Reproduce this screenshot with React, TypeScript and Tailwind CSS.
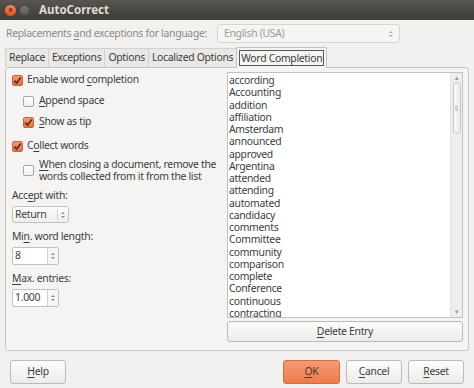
import React from 'react';

const words = [
  'according', 'Accounting', 'addition', 'affiliation', 'Amsterdam', 'announced', 'approved',
  'Argentina', 'attended', 'attending', 'automated', 'candidacy', 'comments', 'Committee',
  'community', 'comparison', 'complete', 'Conference', 'continuous', 'contracting',
];

// letra subrayada (mnemónico)
const U: React.FC<{ children: React.ReactNode }> = ({ children }) => (
  <span className="underline underline-offset-[2px] decoration-[1px]">{children}</span>
);

const Check: React.FC<{ on?: boolean }> = ({ on }) =>
  on ? (
    <span className="w-[11px] h-[11px] rounded-[2px] bg-gradient-to-b from-[#f39a72] to-[#e46d3e] border border-[#c9643c] flex items-center justify-center shrink-0">
      <svg width="9" height="9" viewBox="0 0 9 9">
        <path d="M1.3 4.6 L3.6 7 L7.8 1.6" fill="none" stroke="#4a2c20" strokeWidth="1.6" />
      </svg>
    </span>
  ) : (
    <span className="w-[11px] h-[11px] rounded-[2px] bg-gradient-to-b from-white to-[#f1f0ee] border border-[#a8a6a2] shrink-0" />
  );

const Spin: React.FC = () => (
  <span className="flex flex-col items-center justify-center w-[11px] h-full border-l border-[#d2d0cc] gap-[2px]">
    <span className="w-0 h-0 border-l-[2px] border-r-[2px] border-b-[2px] border-l-transparent border-r-transparent border-b-[#8a8884]" />
    <span className="w-0 h-0 border-l-[2px] border-r-[2px] border-t-[2px] border-l-transparent border-r-transparent border-t-[#8a8884]" />
  </span>
);

const Btn: React.FC<{ children: React.ReactNode; w: string; primary?: boolean }> = ({ children, w, primary }) => (
  <div
    className={
      'h-[24px] rounded-[3px] flex items-center justify-center ' +
      w +
      (primary
        ? ' bg-gradient-to-b from-[#f49a73] to-[#ee7b4c] border border-[#d66a3f] text-[#4a3a33]'
        : ' bg-gradient-to-b from-[#fdfdfc] to-[#ecebe9] border border-[#bcbab6] text-[#3c3c3c]')
    }
  >
    {children}
  </div>
);

const App: React.FC = () => {
  return (
    <div className="w-[474px] h-[388px] bg-[#f2f1f0] flex flex-col text-[#3c3c3c] text-[10.4px] whitespace-nowrap overflow-hidden [font-family:'Noto_Sans',sans-serif] tracking-[-0.3px]">
      {/* barra de título */}
      <div className="h-[20px] shrink-0 bg-gradient-to-b from-[#57554f] to-[#3d3c38] flex items-center pl-[5px] gap-[3px]">
        <span className="w-[11px] h-[11px] rounded-full bg-gradient-to-b from-[#f7885c] to-[#df4a1c] flex items-center justify-center text-[#5a1f0a] text-[8px] leading-none font-bold">×</span>
        <span className="w-[11px] h-[11px] rounded-full bg-gradient-to-b from-[#77756f] to-[#5e5c57] border border-[#4a4844]" />
        <span className="ml-[6px] text-[11.5px] font-bold text-[#dfdbd2] tracking-[0px]">AutoCorrect</span>
      </div>

      {/* idioma */}
      <div className="h-[19px] mt-[4px] flex items-center pl-[6px] pr-[74px]">
        <span className="text-[#8a8884]">Replacements <U>a</U>nd exceptions for language:</span>
        <div className="ml-auto w-[183px] h-[19px] border border-[#d7d5d1] rounded-[3px] bg-[#f6f5f4] flex items-center pl-[6px] text-[#9a9894]">
          <span>English (USA)</span>
          <span className="ml-auto mr-[6px] flex flex-col gap-[2px]">
            <span className="w-0 h-0 border-l-[2px] border-r-[2px] border-b-[2px] border-l-transparent border-r-transparent border-b-[#b0aea9]" />
            <span className="w-0 h-0 border-l-[2px] border-r-[2px] border-t-[2px] border-l-transparent border-r-transparent border-t-[#b0aea9]" />
          </span>
        </div>
      </div>

      {/* pestañas */}
      <div className="mt-[4px] h-[20px] flex items-end pl-[5px] relative z-10">
        {['Replace', 'Exceptions', 'Options', 'Localized Options'].map((t) => (
          <div key={t} className="h-[19px] px-[3px] flex items-center bg-[#e9e8e6] border border-[#d3d1cd] border-b-0 -mr-px">
            {t}
          </div>
        ))}
        <div className="h-[21px] px-[2px] flex items-center bg-[#f5f4f3] border border-[#c4c2be] border-b-0 rounded-t-[2px] -mb-px">
          <span className="border border-[#5a5854] px-[1px] leading-[14px]">Word Completion</span>
        </div>
      </div>

      {/* panel */}
      <div className="mx-[5px] h-[284px] border border-[#c8c6c2] rounded-[3px] bg-[#f5f4f3] flex pl-[6px] pr-[5px] pt-[4px] pb-[8px]">
        <div className="w-[215px] flex flex-col">
          <div className="flex items-center gap-[4px] h-[14px] mt-[1px]">
            <Check on />
            <span>Enable word <U>c</U>ompletion</span>
          </div>
          <div className="flex items-center gap-[5px] h-[14px] mt-[7px] pl-[11px]">
            <Check />
            <span><U>A</U>ppend space</span>
          </div>
          <div className="flex items-center gap-[5px] h-[14px] mt-[7px] pl-[11px]">
            <Check on />
            <span><U>S</U>how as tip</span>
          </div>
          <div className="flex items-center gap-[4px] h-[14px] mt-[10px]">
            <Check on />
            <span>C<U>o</U>llect words</span>
          </div>
          <div className="flex items-center gap-[5px] mt-[5px] pl-[11px] leading-[12px]">
            <Check />
            <span>
              <U>W</U>hen closing a document, remove the
              <br />
              words collected from it from the list
            </span>
          </div>
          <div className="mt-[7px] h-[14px] flex items-center">Acc<U>e</U>pt with:</div>
          <div className="mt-[3px] w-[57px] h-[17px] border border-[#c3c1bd] rounded-[3px] bg-gradient-to-b from-[#fdfdfc] to-[#efeeec] flex items-center pl-[2px]">
            <span>Return</span>
            <span className="ml-auto h-[11px]"><Spin /></span>
          </div>
          <div className="mt-[7px] h-[14px] flex items-center">Mi<U>n</U>. word length:</div>
          <div className="mt-[3px] w-[47px] h-[18px] border border-[#c3c1bd] rounded-[2px] bg-white flex items-center pl-[2px]">
            <span>8</span>
            <span className="ml-auto h-full bg-[#f6f5f4]"><Spin /></span>
          </div>
          <div className="mt-[7px] h-[14px] flex items-center"><U>M</U>ax. entries:</div>
          <div className="mt-[3px] w-[47px] h-[18px] border border-[#c3c1bd] rounded-[2px] bg-white flex items-center pl-[2px]">
            <span>1.000</span>
            <span className="ml-auto h-full bg-[#f6f5f4]"><Spin /></span>
          </div>
        </div>

        <div className="flex-1 flex flex-col">
          <div className="h-[246px] border border-[#c3c1bd] bg-white flex overflow-hidden">
            <div className="flex-1 pl-[1px] pt-[1px] leading-[12.25px] overflow-hidden">
              {words.map((w) => (
                <div key={w}>{w}</div>
              ))}
            </div>
            <div className="w-[12px] border-l border-[#e3e2e0] bg-[#efeeec] flex flex-col items-center py-[2px]">
              <span className="text-[6px] leading-[6px] text-[#9a9894]">▲</span>
              <div className="mt-[1px] w-[8px] h-[52px] rounded-[4px] bg-gradient-to-r from-[#fbfbfa] to-[#eceae7] border border-[#c9c7c3] flex flex-col items-center justify-center gap-[1px]">
                <span className="w-[3px] h-px bg-[#b9b7b3]" />
                <span className="w-[3px] h-px bg-[#b9b7b3]" />
                <span className="w-[3px] h-px bg-[#b9b7b3]" />
              </div>
              <div className="flex-1" />
              <span className="text-[6px] leading-[6px] text-[#9a9894]">▼</span>
            </div>
          </div>
          <div className="mt-[3px] h-[21px] rounded-[3px] bg-gradient-to-b from-[#fdfdfc] to-[#ecebe9] border border-[#bcbab6] flex items-center justify-center">
            <span><U>D</U>elete Entry</span>
          </div>
        </div>
      </div>

      {/* botones */}
      <div className="mt-[9px] flex items-center px-[10px]">
        <Btn w="w-[56px]"><U>H</U>elp</Btn>
        <div className="ml-auto flex gap-[6px]">
          <Btn w="w-[57px]" primary><U>O</U>K</Btn>
          <Btn w="w-[56px]"><U>C</U>ancel</Btn>
          <Btn w="w-[56px]"><U>R</U>eset</Btn>
        </div>
      </div>
    </div>
  );
};

export default App;
